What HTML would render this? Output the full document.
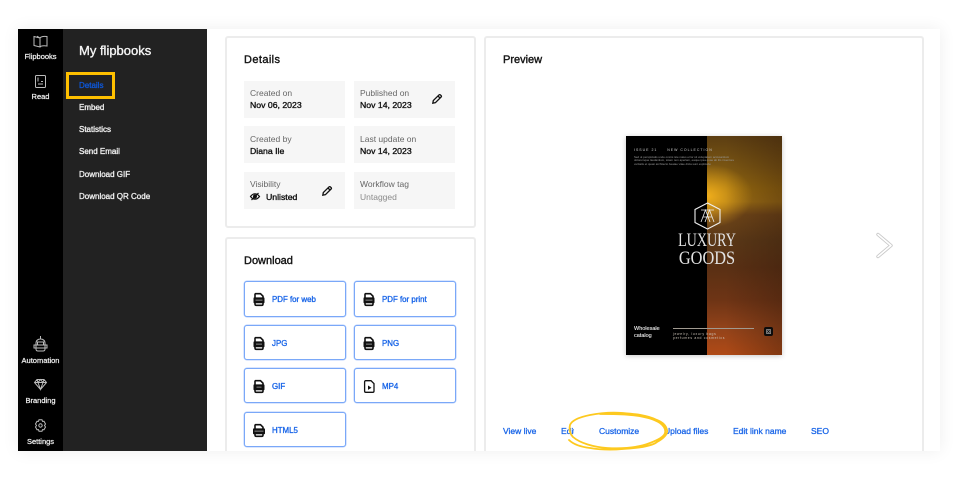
<!DOCTYPE html>
<html><head><meta charset="utf-8">
<style>
*{box-sizing:border-box}
html,body{margin:0;padding:0;width:960px;height:480px;overflow:hidden;background:#fff;font-family:"Liberation Sans",sans-serif}
.abs,.t,.card,.tile,.btn{position:absolute}
.t{white-space:nowrap;line-height:12px}
#win{position:absolute;left:18px;top:29px;width:922px;height:422px;background:#fff;box-shadow:0 0 16px rgba(0,0,0,.07)}
#rail{position:absolute;left:18px;top:29px;width:45px;height:422px;background:#000}
#side{position:absolute;left:63px;top:29px;width:144px;height:422px;background:#222}
.rl{color:#eee;font-size:7.5px;width:45px;left:18px;text-align:center;-webkit-text-stroke:.25px #eee}
.sl{color:#eee;font-size:8px;left:79px;-webkit-text-stroke:.35px #eee}
.card{background:#fff;border:2px solid #ececec;border-radius:3px}
.tile{background:#f6f6f6;width:101px;height:37px}
.lab{font-size:8.5px;color:#666}
.val{font-size:8.7px;color:#111;-webkit-text-stroke:.35px #111}
.btn{width:101.5px;height:36px;border:1px solid #7aa8f8;border-radius:3px;background:#fff;box-shadow:0 0 0 .5px #b4cefc}
.bl{color:#1a66e8;font-size:7.9px;-webkit-text-stroke:.35px #1a66e8}
.lk{color:#1a66e8;font-size:8.5px;-webkit-text-stroke:.3px #1a66e8;top:425px}
h3{margin:0;position:absolute;font-weight:400;font-size:11px;color:#151515;white-space:nowrap;line-height:14px;-webkit-text-stroke:.4px #151515}
svg{position:absolute;overflow:visible}
</style></head>
<body>
<div id="win"></div>
<div id="rail"></div>
<div id="side"></div>

<!-- rail icons -->
<svg style="left:33px;top:35px" width="15" height="13" viewBox="0 0 15 13" fill="none" stroke="#bbb" stroke-width="1"><path d="M1 1.5L7 3V12L1 10.5ZM7 3C8 1.5 10 1 14 1.5V11C10 10.5 8 10.8 7 12M4 1.2L7 3"/></svg>
<div class="t rl" style="top:51px">Flipbooks</div>
<svg style="left:35px;top:75px" width="11" height="13" viewBox="0 0 11 13" fill="none" stroke="#bbb" stroke-width="1"><rect x=".5" y=".5" width="10" height="12" rx="1"/><path d="M3 6.5V2.5M3 9H8M6 6.5H8" /></svg>
<div class="t rl" style="top:91px">Read</div>
<svg style="left:33px;top:336px" width="15" height="16" viewBox="0 0 15 16" fill="none" stroke="#bbb" stroke-width="1"><path d="M7.5 0V3M3 7C3 4.5 5 3 7.5 3S12 4.5 12 7V13C12 14.5 11 15 10 15H5C4 15 3 14.5 3 13Z"/><path d="M1 9H14V12H1ZM4.5 6H10.5V9H4.5Z"/></svg>
<div class="t rl" style="top:355px">Automation</div>
<svg style="left:34px;top:379px" width="13" height="11" viewBox="0 0 13 11" fill="none" stroke="#bbb" stroke-width="1"><path d="M3 .5H10L12.5 3.5L6.5 10.5L.5 3.5ZM.5 3.5H12.5M4 3.5L6.5 10.5L9 3.5M3 .5L4 3.5L6.5 .5L9 3.5L10 .5"/></svg>
<div class="t rl" style="top:395px">Branding</div>
<svg style="left:35px;top:419px" width="11" height="13" viewBox="0 0 11 13" fill="none" stroke="#bbb" stroke-width="1"><path d="M4 .8H7L7.5 2.4L9 2.3L10.5 5L9.5 6.5L10.5 8L9 10.7L7.5 10.6L7 12.2H4L3.5 10.6L2 10.7L.5 8L1.5 6.5L.5 5L2 2.3L3.5 2.4Z"/><circle cx="5.5" cy="6.5" r="1.7"/></svg>
<div class="t rl" style="top:436px">Settings</div>

<!-- sidebar -->
<div class="t" style="left:79px;top:44px;color:#f5f5f5;font-size:13px;line-height:14px;-webkit-text-stroke:.35px #f5f5f5">My flipbooks</div>
<div class="abs" style="left:66px;top:72px;width:49px;height:27px;border:3px solid #ffc000"></div>
<div class="t sl" style="top:80px;color:#0d57d8;-webkit-text-stroke:.35px #0d57d8">Details</div>
<div class="t sl" style="top:102px">Embed</div>
<div class="t sl" style="top:124px">Statistics</div>
<div class="t sl" style="top:146px">Send Email</div>
<div class="t sl" style="top:169px">Download GIF</div>
<div class="t sl" style="top:191px">Download QR Code</div>

<!-- details -->
<div class="card" style="left:225px;top:36px;width:251px;height:192px"></div>
<h3 style="left:244px;top:53px;letter-spacing:.4px">Details</h3>
<div class="tile" style="left:244px;top:81px"></div>
<div class="tile" style="left:354px;top:81px"></div>
<div class="tile" style="left:244px;top:126px"></div>
<div class="tile" style="left:354px;top:126px"></div>
<div class="tile" style="left:244px;top:172px"></div>
<div class="tile" style="left:354px;top:172px"></div>
<div class="t lab" style="left:250px;top:87px">Created on</div>
<div class="t val" style="left:250px;top:99px">Nov 06, 2023</div>
<div class="t lab" style="left:360px;top:87px">Published on</div>
<div class="t val" style="left:360px;top:99px">Nov 14, 2023</div>
<div class="t lab" style="left:250px;top:133px">Created by</div>
<div class="t val" style="left:250px;top:145px">Diana Ile</div>
<div class="t lab" style="left:360px;top:133px">Last update on</div>
<div class="t val" style="left:360px;top:145px">Nov 14, 2023</div>
<div class="t lab" style="left:250px;top:178px">Visibility</div>
<div class="t val" style="left:266px;top:191px">Unlisted</div>
<div class="t lab" style="left:360px;top:178px">Workflow tag</div>
<div class="t" style="left:360px;top:191px;font-size:8.5px;color:#8a8a8a">Untagged</div>
<svg style="left:250px;top:192px" width="10" height="9" viewBox="0 0 10 9" fill="none" stroke="#111" stroke-width="1.2"><path d="M.5 4.5C2 2.5 3.5 1.8 5 1.8S8 2.5 9.5 4.5C8 6.5 6.5 7.2 5 7.2S2 6.5.5 4.5Z"/><circle cx="5" cy="4.5" r="1.4" fill="#111"/><path d="M1.5 8L8.5 1"/></svg>
<svg style="left:432px;top:94px" width="10" height="10" viewBox="0 0 10 10" fill="none" stroke="#111" stroke-width="1.3"><path d="M.8 9.2L1.3 6.6L7 .9C7.4.5 8 .5 8.4.9L9.1 1.6C9.5 2 9.5 2.6 9.1 3L3.4 8.7ZM6 2L8 4"/></svg>
<svg style="left:322px;top:186px" width="10" height="10" viewBox="0 0 10 10" fill="none" stroke="#111" stroke-width="1.3"><path d="M.8 9.2L1.3 6.6L7 .9C7.4.5 8 .5 8.4.9L9.1 1.6C9.5 2 9.5 2.6 9.1 3L3.4 8.7ZM6 2L8 4"/></svg>

<!-- download -->
<div class="card" style="left:225px;top:237px;width:251px;height:214px;border-bottom:none;border-radius:3px 3px 0 0"></div>
<h3 style="left:244px;top:254px">Download</h3>
<div class="btn" style="left:244px;top:281px"></div>
<div class="btn" style="left:354px;top:281px"></div>
<div class="btn" style="left:244px;top:325px;height:35px"></div>
<div class="btn" style="left:354px;top:325px;height:35px"></div>
<div class="btn" style="left:244px;top:368px;height:35px"></div>
<div class="btn" style="left:354px;top:368px;height:35px"></div>
<div class="btn" style="left:244px;top:412px;height:35px"></div>
<div class="t bl" style="left:272px;top:294px">PDF for web</div>
<div class="t bl" style="left:382px;top:294px">PDF for print</div>
<div class="t bl" style="left:272px;top:338px">JPG</div>
<div class="t bl" style="left:382px;top:338px">PNG</div>
<div class="t bl" style="left:272px;top:381px">GIF</div>
<div class="t bl" style="left:382px;top:381px">MP4</div>
<div class="t bl" style="left:272px;top:425px">HTML5</div>
<svg style="left:253px;top:293px" width="12" height="13" viewBox="0 0 12 13"><path d="M2.5.7H7.5L10 3.2V11C10 11.7 9.5 12.3 8.8 12.3H3.2C2.5 12.3 2 11.7 2 11V1.2Z" fill="none" stroke="#111" stroke-width="1.6"/><rect x=".5" y="4.4" width="11" height="5.8" rx=".8" fill="#111"/><rect x="2.5" y="6.5" width="7" height="1.4" fill="#666"/></svg>
<svg style="left:363px;top:293px" width="12" height="13" viewBox="0 0 12 13"><path d="M2.5.7H7.5L10 3.2V11C10 11.7 9.5 12.3 8.8 12.3H3.2C2.5 12.3 2 11.7 2 11V1.2Z" fill="none" stroke="#111" stroke-width="1.6"/><rect x=".5" y="4.4" width="11" height="5.8" rx=".8" fill="#111"/><rect x="2.5" y="6.5" width="7" height="1.4" fill="#666"/></svg>
<svg style="left:253px;top:337px" width="12" height="13" viewBox="0 0 12 13"><path d="M2.5.7H7.5L10 3.2V11C10 11.7 9.5 12.3 8.8 12.3H3.2C2.5 12.3 2 11.7 2 11V1.2Z" fill="none" stroke="#111" stroke-width="1.6"/><rect x=".5" y="4.4" width="11" height="5.8" rx=".8" fill="#111"/><rect x="3" y="6.5" width="6" height="1.4" fill="#666"/></svg>
<svg style="left:363px;top:337px" width="12" height="13" viewBox="0 0 12 13"><path d="M2.5.7H7.5L10 3.2V11C10 11.7 9.5 12.3 8.8 12.3H3.2C2.5 12.3 2 11.7 2 11V1.2Z" fill="none" stroke="#111" stroke-width="1.6"/><rect x=".5" y="4.4" width="11" height="5.8" rx=".8" fill="#111"/><rect x="3" y="6.5" width="6" height="1.4" fill="#666"/></svg>
<svg style="left:253px;top:380px" width="12" height="13" viewBox="0 0 12 13"><path d="M2.5.7H7.5L10 3.2V11C10 11.7 9.5 12.3 8.8 12.3H3.2C2.5 12.3 2 11.7 2 11V1.2Z" fill="none" stroke="#111" stroke-width="1.6"/><rect x=".5" y="4.4" width="11" height="5.8" rx=".8" fill="#111"/><rect x="3.5" y="6.5" width="5" height="1.4" fill="#666"/></svg>
<svg style="left:364px;top:380px" width="11" height="13" viewBox="0 0 11 13"><path d="M1.7.7H7L10 3.7V11C10 11.7 9.5 12.3 8.8 12.3H1.7C1 12.3.6 11.7.6 11V2C.6 1.2 1 .7 1.7.7Z" fill="none" stroke="#111" stroke-width="1.3"/><path d="M4 5.5L7.5 7.7L4 9.9Z" fill="#111"/></svg>
<svg style="left:253px;top:424px" width="12" height="13" viewBox="0 0 12 13"><path d="M2.5.7H7.5L10 3.2V11C10 11.7 9.5 12.3 8.8 12.3H3.2C2.5 12.3 2 11.7 2 11V1.2Z" fill="none" stroke="#111" stroke-width="1.6"/><rect x="0" y="4.4" width="12" height="5.8" rx=".8" fill="#111"/><rect x="1.5" y="6.5" width="9" height="1.4" fill="#666"/></svg>

<!-- preview -->
<div class="card" style="left:484px;top:36px;width:440px;height:415px;border-bottom:none;border-radius:3px 3px 0 0"></div>
<h3 style="left:503px;top:53px">Preview</h3>

<div class="abs" style="left:626px;top:136px;width:156px;height:219px;background:#000;box-shadow:0 1px 5px rgba(0,0,0,.22)"></div>
<div class="abs" style="left:707px;top:136px;width:75px;height:219px;background:linear-gradient(180deg,#5c3e12 0%,#7a5512 14%,#94680f 24%,#9a6c14 30%,#6e4518 36%,#5a3817 48%,#5a3014 60%,#6e3415 75%,#93431a 88%,#b04a16 100%)"></div>
<div class="abs" style="left:707px;top:136px;width:75px;height:219px;background:radial-gradient(ellipse 46px 32px at 0 60px,rgba(245,178,28,.95),rgba(245,178,28,0))"></div>
<div class="abs" style="left:707px;top:136px;width:75px;height:219px;background:linear-gradient(90deg,rgba(50,25,10,0) 25%,rgba(50,25,10,.35) 95%)"></div>
<div class="t" style="left:634px;top:147px;font-size:3.5px;color:#ccc;letter-spacing:1px;line-height:6px">ISSUE 21 &nbsp;&nbsp;&nbsp; NEW COLLECTION</div>
<div class="t" style="left:634px;top:156px;font-size:2.9px;color:#999;line-height:3.4px">Sed ut perspiciatis unde omnis iste natus error sit voluptatem accusantium<br>doloremque laudantium, totam rem aperiam, eaque ipsa quae ab illo inventore<br>veritatis et quasi architecto beatae vitae dicta sunt explicabo</div>
<svg style="left:694px;top:202px" width="27" height="28" viewBox="0 0 27 28" fill="none" stroke="#eee" stroke-width="1.1"><path d="M13.5 1L26 7.5V20.5L13.5 27L1 20.5V7.5Z"/><path d="M7 20L11.5 8L16 20M11 20L15.5 8L20 20M7 8H20M9 15H18" stroke-width=".8"/></svg>
<div class="t" style="left:626px;top:231px;width:162px;text-align:center;font-family:'Liberation Serif',serif;font-size:19px;line-height:20px;color:#e2e2e2;transform:scaleX(.74)">LUXURY</div>
<div class="t" style="left:626px;top:249px;width:162px;text-align:center;font-family:'Liberation Serif',serif;font-size:19px;line-height:20px;color:#e2e2e2;transform:scaleX(.86)">GOODS</div>
<div class="t" style="left:634px;top:326px;font-size:5.5px;color:#f0f0f0;line-height:6.5px;-webkit-text-stroke:.1px #f0f0f0">Wholesale<br>catalog</div>
<div class="abs" style="left:673px;top:328px;width:81px;height:1px;background:#a09a90"></div>
<div class="t" style="left:673px;top:332px;font-size:3.4px;color:#c9c0b5;letter-spacing:.7px;line-height:4px">jewelry, luxury bags<br>perfumes and cosmetics</div>
<div class="abs" style="left:764px;top:327px;width:9px;height:9px;background:#0c0c0c;border-radius:2px"></div>
<svg style="left:766px;top:329px" width="5" height="5" viewBox="0 0 5 5" fill="none" stroke="#bbb" stroke-width=".6"><rect x=".3" y=".3" width="4.4" height="4.4" rx="1"/><circle cx="2.5" cy="2.5" r="1"/></svg>

<svg style="left:876px;top:233px" width="17" height="25" viewBox="0 0 17 25" fill="none"><path d="M2 1.5L15 12.5L2 23.5" stroke="#c9c9c9" stroke-width="3.4" stroke-linejoin="round" stroke-linecap="round"/><path d="M2 1.5L15 12.5L2 23.5" stroke="#fff" stroke-width="1.6" stroke-linejoin="round" stroke-linecap="round"/></svg>

<div class="t lk" style="left:503px">View live</div>
<div class="t lk" style="left:561px">Edit</div>
<div class="t lk" style="left:599px">Customize</div>
<div class="t lk" style="left:664px">Upload files</div>
<div class="t lk" style="left:733px">Edit link name</div>
<div class="t lk" style="left:811px">SEO</div>
<div class="abs" style="left:574px;top:420px;width:4px;height:18px;background:#fff"></div>
<div class="abs" style="left:660px;top:424px;width:7px;height:14px;background:#fff"></div>
<svg style="left:560px;top:410px" width="120" height="44" viewBox="0 0 120 44" fill="none" stroke="#fdc91f" stroke-linecap="round" stroke-width="1.8"><path d="M9 30C14 35 22 37 30 38C42 40 52 40 63 39C80 38 92 36 97 32C104 28 108 24 107 20C106 15 102 12 97 10C87 5 75 4 63 3C50 2 40 3 30 5C20 7 12 10 10 15C9 20 10 24 13 27C20 33 33 37 47 38C65 39 80 37 90 33C98 30 104 27 105 23C106 19 104 16 100 13C92 8 82 6 70 5C60 4 50 4 40 4"/></svg>
</body></html>
